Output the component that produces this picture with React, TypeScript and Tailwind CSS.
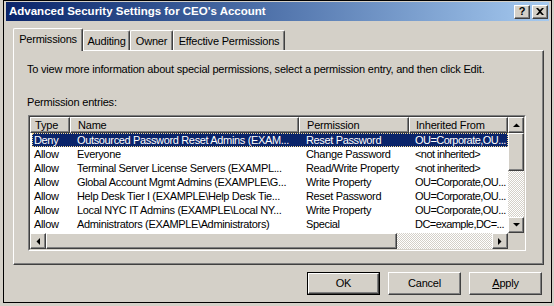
import React from "react";

// classic 3D edge styles
const raised =
  "border border-t-white border-l-white border-r-[#404040] border-b-[#404040] shadow-[inset_-1px_-1px_#808080]";
const checker =
  "bg-[repeating-conic-gradient(#ffffff_0_25%,#d4d0c8_0_50%)] bg-[length:2px_2px]";

const rows = [
  ["Deny", "Outsourced Password Reset Admins (EXAM...", "Reset Password", "OU=Corporate,OU..."],
  ["Allow", "Everyone", "Change Password", "<not inherited>"],
  ["Allow", "Terminal Server License Servers (EXAMPL...", "Read/Write Property", "<not inherited>"],
  ["Allow", "Global Account Mgmt Admins (EXAMPLE\\G...", "Write Property", "OU=Corporate,OU..."],
  ["Allow", "Help Desk Tier I (EXAMPLE\\Help Desk Tie...", "Reset Password", "OU=Corporate,OU..."],
  ["Allow", "Local NYC IT Admins (EXAMPLE\\Local NY...", "Write Property", "OU=Corporate,OU..."],
  ["Allow", "Administrators (EXAMPLE\\Administrators)", "Special", "DC=example,DC=..."],
  ["Allow", "Enterprise Admins (EXAMPLE\\Enterprise...", "Full Control", "DC=example,DC=..."],
];

const columns = [
  { label: "Type", w: "w-[40px]", pad: "pl-[4px]" },
  { label: "Name", w: "w-[229px]", pad: "pl-[7px]" },
  { label: "Permission", w: "w-[110px]", pad: "pl-[7px]" },
  { label: "Inherited From", w: "w-[99px]", pad: "pl-[6px]" },
];

// row cells are shifted 2px right, so the first and last cells give the 2px back
const cellWidths = [
  "w-[38px] pl-[1px]",
  "w-[229px] pl-[6px]",
  "w-[110px] pl-[6px]",
  "w-[97px] pl-[5px] tracking-[-0.55px]",
];

function Arrow({ dir }: { dir: "up" | "down" | "left" | "right" }) {
  const pts = {
    up: "0,4 7,4 3.5,0.5",
    down: "0,0 7,0 3.5,3.5",
    left: "4,0 4,7 0.5,3.5",
    right: "0,0 0,7 3.5,3.5",
  }[dir];
  const vertical = dir === "up" || dir === "down";
  return (
    <svg width={vertical ? 7 : 4} height={vertical ? 4 : 7} viewBox={vertical ? "0 0 7 4" : "0 0 4 7"}>
      <polygon points={pts} fill="#000" />
    </svg>
  );
}

function ScrollButton({ dir }: { dir: "up" | "down" | "left" | "right" }) {
  return (
    <div className={`flex h-[16px] w-[16px] shrink-0 items-center justify-center bg-[#d4d0c8] ${raised}`}>
      <Arrow dir={dir} />
    </div>
  );
}

function CaptionButton({ children }: { children: React.ReactNode }) {
  return (
    <div className={`flex h-[14px] w-[16px] items-center justify-center bg-[#d4d0c8] ${raised}`}>
      {children}
    </div>
  );
}

function PushButton({ children, isDefault }: { children: React.ReactNode; isDefault?: boolean }) {
  return (
    <div className={`h-[23px] w-[73px] ${isDefault ? "border border-black" : ""}`}>
      <div className={`flex h-full w-full items-center justify-center bg-[#d4d0c8] ${raised}`}>{children}</div>
    </div>
  );
}

export default function App() {
  const tabs = [
    { label: "Permissions", w: "w-[70px]", active: true },
    { label: "Auditing", w: "w-[47px]" },
    { label: "Owner", w: "w-[43px]" },
    { label: "Effective Permissions", w: "w-[112px]" },
  ];

  return (
    <div className="h-[306px] w-[554px] overflow-hidden bg-[#d4d0c8] font-['Liberation_Sans',Arial,sans-serif] text-[11px] tracking-[-0.2px] text-black">
      <div className="ml-[3px] flex h-[303px] w-[549px] flex-col border border-black px-[1px] pt-[1px]">
        {/* title bar */}
        <div className="mx-[1px] flex h-[19px] items-center bg-linear-to-r from-[#0a246a] to-[#a6caf0] pl-[3px] pr-[1px]">
          <span className="flex-1 text-[11.5px] font-bold leading-none tracking-normal text-white">
            Advanced Security Settings for CEO's Account
          </span>
          <div className="flex gap-[2px]">
            <CaptionButton>
              <span className="text-[11px] font-bold leading-none">?</span>
            </CaptionButton>
            <CaptionButton>
              <svg width="8" height="7" viewBox="0 0 8 7">
                <path d="M0 0h2l2 2 2-2h2L5 3.5 8 7H6L4 5 2 7H0l3-3.5z" fill="#000" />
              </svg>
            </CaptionButton>
          </div>
        </div>

        {/* tabs */}
        <div className="ml-[8px] mt-[7px] flex h-[22px] items-end">
          {tabs.map((t) => (
            <div
              key={t.label}
              className={`flex ${t.w} items-center justify-center rounded-t-[2px] border-l border-t border-r border-l-white border-t-white border-r-[#404040] bg-[#d4d0c8] shadow-[inset_-1px_0_#808080] ${
                t.active ? "relative z-10 -mb-px h-[23px] pb-[1px]" : "h-[20px] pt-[1px]"
              }`}
            >
              {t.label}
            </div>
          ))}
        </div>

        {/* tab panel */}
        <div className={`ml-[8px] h-[215px] w-[531px] ${raised}`}>
          <div className="ml-[13px] mt-[12px] leading-[13px]">
            To view more information about special permissions, select a permission entry, and then click Edit.
          </div>
          <div className="ml-[13px] mt-[20px] leading-[13px]">Permission entries:</div>

          {/* list view */}
          <div className="ml-[14px] mt-[6px] h-[136px] w-[498px] border border-t-[#808080] border-l-[#808080] border-r-white border-b-white">
            <div className="flex h-full w-full flex-col border border-t-[#404040] border-l-[#404040] border-r-[#d4d0c8] border-b-[#d4d0c8] bg-white">
              <div className="flex h-[116px]">
                <div className="w-[478px] overflow-hidden">
                  <div className="flex h-[16px]">
                    {columns.map((c) => (
                      <div
                        key={c.label}
                        className={`${c.w} ${c.pad} flex shrink-0 items-center bg-[#d4d0c8] ${raised}`}
                      >
                        {c.label}
                      </div>
                    ))}
                  </div>
                  {rows.map((r, i) => (
                    <div
                      key={i}
                      className={`ml-[2px] flex h-[14px] items-center leading-[14px] tracking-[-0.35px] ${
                        i === 0
                          ? "border border-dotted border-[#f5db95] bg-[#0a246a] text-white"
                          : "border border-transparent"
                      }`}
                    >
                      {r.map((cell, j) => (
                        <div key={j} className={`${cellWidths[j]} shrink-0 overflow-hidden whitespace-nowrap`}>
                          {cell}
                        </div>
                      ))}
                    </div>
                  ))}
                </div>
                {/* vertical scrollbar */}
                <div className="flex w-[16px] flex-col">
                  <ScrollButton dir="up" />
                  <div className={`h-[38px] shrink-0 bg-[#d4d0c8] ${raised}`} />
                  <div className={`flex-1 ${checker}`} />
                  <ScrollButton dir="down" />
                </div>
              </div>
              {/* horizontal scrollbar */}
              <div className="flex h-[16px]">
                <ScrollButton dir="left" />
                <div className={`h-[16px] w-[351px] bg-[#d4d0c8] ${raised}`} />
                <div className={`flex-1 ${checker}`} />
                <ScrollButton dir="right" />
                <div className="w-[16px] bg-[#d4d0c8]" />
              </div>
            </div>
          </div>
        </div>

        {/* buttons */}
        <div className="ml-[302px] mt-[7px] flex gap-[8px]">
          <PushButton isDefault>OK</PushButton>
          <PushButton>Cancel</PushButton>
          <PushButton>
            <span>
              <span className="underline">A</span>pply
            </span>
          </PushButton>
        </div>
      </div>
    </div>
  );
}
